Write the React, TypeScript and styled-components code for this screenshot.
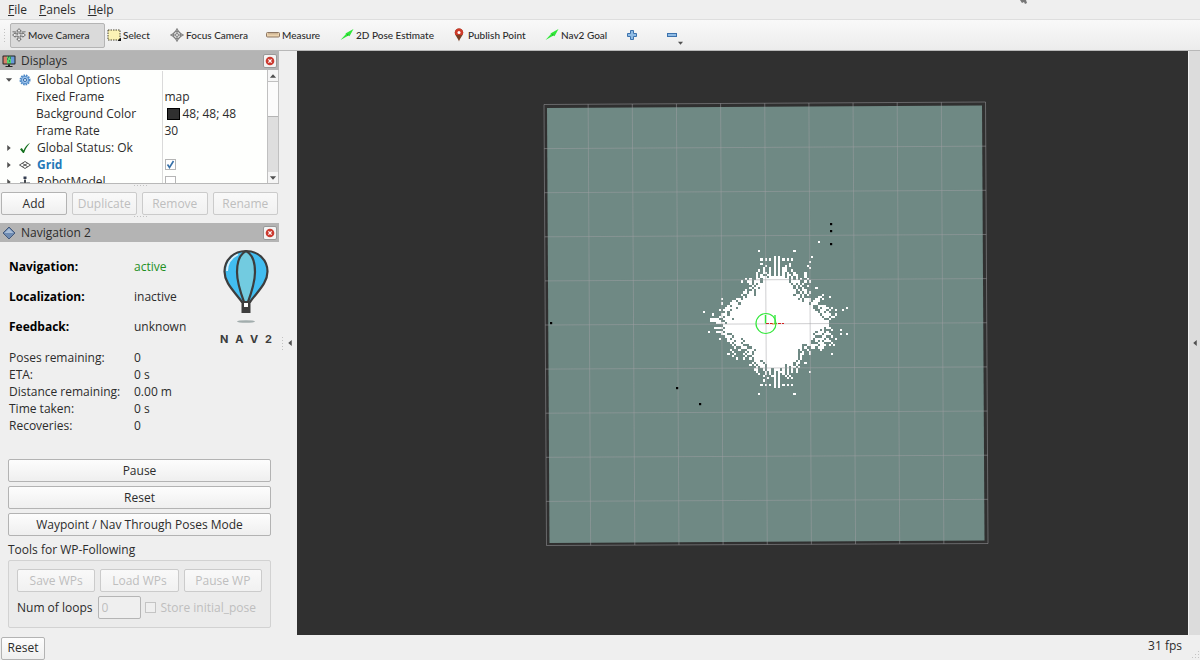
import React from "react";
import styled, { createGlobalStyle } from "styled-components";

const Global = createGlobalStyle`
  *, *::before, *::after { box-sizing: border-box; }
  body { margin: 0; background: #efefef; }
  body, button, input, table {
    font-family: "Open Sans", "Noto Sans", sans-serif;
    font-size: 12px;
    line-height: 16px;
    color: #2c2c2c;
  }
`;

const Window = styled.div`
  display: flex;
  flex-direction: column;
  height: 100vh;
  min-height: 640px;
  overflow: hidden;
`;

const MenuBar = styled.nav`
  display: flex;
  flex: none;
  gap: 12px;
  height: 20px;
  padding: 1px 8px;
  border-bottom: 1px solid #dedede;
`;

const MenuItem = styled.button`
  padding: 0;
  border: 0;
  background: none;
  &::first-letter { text-decoration: underline; }
`;

const Cursor = styled.svg`
  position: absolute;
  top: 0;
  left: 85%;
`;

const Toolbar = styled.div`
  display: flex;
  flex: none;
  align-items: center;
  height: 31px;
  padding-left: 10px;
  background: linear-gradient(#f9f9f9, #ececec);
  border-bottom: 1px solid #b8b8b8;
  position: relative;
`;

const Handle = styled.span<{ $vertical?: boolean }>`
  width: ${(p) => (p.$vertical ? "4px" : "14px")};
  height: ${(p) => (p.$vertical ? "14px" : "4px")};
  background-image: radial-gradient(#c2c2c2 1px, transparent 1px);
  background-size: 3px 3px;
`;

const ToolHandle = styled(Handle)`
  position: absolute;
  left: 3px;
`;

const ToolButton = styled.button<{ $width: number; $active?: boolean }>`
  display: flex;
  align-items: center;
  gap: 2px;
  flex: none;
  width: ${(p) => p.$width}px;
  height: 25px;
  padding: 0 1px;
  border: 1px solid ${(p) => (p.$active ? "#b4b4b4" : "transparent")};
  border-radius: 2px;
  background: ${(p) => (p.$active ? "#dadada" : "none")};
  font-family: Lato, "Open Sans", sans-serif;
  font-size: 10px;
  font-weight: 500;
  white-space: nowrap;
  position: relative;
  svg { flex: none; }
`;

const DropMark = styled.svg`
  position: absolute;
  right: 8px;
  bottom: 1px;
`;

const Main = styled.main`
  display: flex;
  flex: 1;
  min-height: 0;
`;

const Dock = styled.aside`
  display: flex;
  flex-direction: column;
  flex: none;
  width: 279px;
`;

const DockTitle = styled.header`
  display: flex;
  align-items: center;
  gap: 5px;
  flex: none;
  height: 19px;
  padding: 0 2px;
  background: #b4b4b4;
`;

const DockName = styled.h2`
  flex: 1;
  margin: 0;
  font-size: 12px;
  font-weight: 400;
`;

const CloseButton = styled.button`
  display: flex;
  align-items: center;
  justify-content: center;
  width: 14px;
  height: 14px;
  padding: 0;
  border: 1px solid #999;
  border-radius: 2px;
  background: #f4f4f4;
`;

const TreeArea = styled.div`
  display: flex;
  flex: none;
  height: 114px;
  overflow: hidden;
  background: #fefffd;
  border-bottom: 1px solid #b8b8b8;
`;

const TreeBody = styled.div`
  flex: 1;
  padding-top: 1px;
`;

const Tree = styled.table`
  width: 100%;
  table-layout: fixed;
  border-collapse: collapse;
`;

const TreeRow = styled.tr`
  height: 17px;
`;

const NameCell = styled.td<{ $child?: boolean }>`
  width: 162px;
  padding: 0 0 0 ${(p) => (p.$child ? 36 : 5)}px;
  border-right: 1px solid #dadada;
`;

const ValueCell = styled.td`
  padding: 0 0 0 2px;
`;

const CellContent = styled.div<{ $gap: number }>`
  display: flex;
  align-items: center;
  gap: ${(p) => p.$gap}px;
  height: 17px;
  white-space: nowrap;
`;

const DisplayName = styled.span<{ $active?: boolean }>`
  color: ${(p) => (p.$active ? "#2478b8" : "inherit")};
  font-weight: ${(p) => (p.$active ? 700 : 400)};
`;

const Swatch = styled.span`
  width: 13px;
  height: 12px;
  margin-left: 2px;
  border: 1px solid #000;
  background: #303030;
`;

const Check = styled.input`
  appearance: none;
  flex: none;
  width: 11px;
  height: 11px;
  margin: 0;
  border: 1px solid #b5b5b5;
  background: #fff;
  &:disabled { background: #efefef; border-color: #c4c4c4; }
`;

const CheckWrap = styled.label`
  display: grid;
  svg, input { grid-area: 1 / 1; place-self: center; }
  svg { pointer-events: none; z-index: 1; }
`;

const Scrollbar = styled.div`
  display: flex;
  flex-direction: column;
  flex: none;
  width: 12px;
  background: #dedede;
  border-left: 1px solid #c0c0c0;
  border-right: 1px solid #c0c0c0;
`;

const ScrollStep = styled.button`
  display: flex;
  align-items: center;
  justify-content: center;
  height: 11px;
  padding: 0;
  border: 0;
  background: #f5f5f5;
`;

const ScrollTrack = styled.div`
  flex: 1;
`;

const ScrollThumb = styled.div`
  height: 36px;
  background: #fbfbfb;
  border-top: 1px solid #c0c0c0;
  border-bottom: 1px solid #b4b4b4;
`;

const HandleRow = styled.div`
  display: flex;
  justify-content: center;
  flex: none;
  height: 8px;
`;

const ButtonRow = styled.div`
  display: grid;
  grid-auto-flow: column;
  grid-auto-columns: 1fr;
  gap: 5px;
`;

const DisplayActions = styled(ButtonRow)`
  padding: 0 1px;
`;

const PushButton = styled.button`
  height: 23px;
  padding: 0;
  border: 1px solid #b3b3b3;
  border-radius: 2px;
  background: linear-gradient(#fdfdfd, #efefef);
  text-align: center;
  white-space: nowrap;
  &:disabled {
    color: #bebebe;
    border-color: #cbcbcb;
    background: linear-gradient(#f9f9f9, #f1f1f1);
  }
`;

const NavStatus = styled.section`
  display: flex;
  justify-content: space-between;
  padding: 7px 7px 0 9px;
`;

const StatusLists = styled.div`
  display: flex;
  flex-direction: column;
  gap: 7px;
  padding-top: 3px;
`;

const StatusList = styled.dl`
  display: grid;
  grid-template-columns: 125px auto;
  margin: 0;
`;

const StatusTerm = styled.dt<{ $major?: boolean }>`
  line-height: ${(p) => (p.$major ? 30 : 17)}px;
  font-weight: ${(p) => (p.$major ? 700 : 400)};
  color: ${(p) => (p.$major ? "#000" : "inherit")};
`;

const StatusValue = styled.dd<{ $major?: boolean; $good?: boolean }>`
  margin: 0;
  line-height: ${(p) => (p.$major ? 30 : 17)}px;
  color: ${(p) => (p.$good ? "#1e8f1e" : "inherit")};
`;

const Brand = styled.figure`
  display: flex;
  flex-direction: column;
  align-items: center;
  gap: 10px;
  width: 52px;
  margin: 0;
`;

const BrandName = styled.figcaption`
  display: flex;
  justify-content: space-between;
  width: 100%;
  font-family: Inter, sans-serif;
  font-size: 11px;
  font-weight: 700;
  line-height: 12px;
  color: #3d3d3d;
`;

const NavControls = styled.section`
  display: flex;
  flex-direction: column;
  gap: 4px;
  padding: 25px 8px 0;
`;

const ToolsSection = styled.div``;

const ToolsLabel = styled.h3`
  margin: 0;
  font-size: 12px;
  font-weight: 400;
  line-height: 20px;
`;

const GroupBox = styled.div`
  display: flex;
  flex-direction: column;
  gap: 4px;
  height: 68px;
  padding: 8px;
  border: 1px solid #d2d2d2;
  border-radius: 2px;
  background: #ebebeb;
`;

const LoopRow = styled.div`
  display: flex;
  align-items: center;
  justify-content: space-between;
  padding-right: 6px;
  white-space: nowrap;
`;

const LoopInput = styled.input`
  width: 43px;
  height: 23px;
  padding: 0 3px;
  border: 1px solid #b5b5b5;
  border-radius: 2px;
  background: #efefef;
  &:disabled { color: #bebebe; }
`;

const StoreLabel = styled.label`
  display: flex;
  align-items: center;
  gap: 4px;
  color: #bebebe;
`;

const Splitter = styled.button<{ $right?: boolean }>`
  display: flex;
  align-items: center;
  justify-content: ${(p) => (p.$right ? "center" : "space-between")};
  flex: none;
  width: ${(p) => (p.$right ? 12 : 18)}px;
  padding: ${(p) => (p.$right ? "0" : "0 3px 0 1px")};
  border: 0;
  border-left: 1px solid ${(p) => (p.$right ? "#f4f4f4" : "#efefef")};
  background: ${(p) => (p.$right ? "#dcdcdc" : "#efefef")};
`;

const Viewport = styled.section`
  flex: 1;
  min-width: 0;
  background: #303030;
  svg { display: block; width: 100%; height: 100%; }
`;

const StatusBar = styled.footer`
  display: flex;
  align-items: center;
  justify-content: space-between;
  flex: none;
  height: 25px;
  padding: 1px 18px 0 1px;
  position: relative;
`;

const ResetButton = styled(PushButton)`
  width: 44px;
`;

const FrameRate = styled.span`
  padding-bottom: 4px;
`;

const SizeGrip = styled.svg`
  position: absolute;
  right: 0;
  bottom: 0;
`;

/* ---------- icons ---------- */

const MoveIcon = () => (
  <svg width="14" height="14" viewBox="0 0 14 14" fill="#e8e8e8" stroke="#555" strokeWidth="0.8">
    <path d="M7 .6 9.200 3H8v2.800h2.800V4.800L13.400 7l-2.600 2.200V8.200H8V11h1.200L7 13.400 4.800 11H6V8.200H3.200v1L.6 7l2.600-2.200v1H6V3H4.800z" />
    <circle cx="7" cy="7" r="1.800" fill="#ddd" strokeDasharray="1.500 1" />
    <path d="M.5 3.800 4.500 4M13.500 3.800 9.500 4" />
  </svg>
);
const SelectIcon = () => (
  <svg width="14" height="14" viewBox="0 0 14 14">
    <rect x="1" y="2" width="12" height="10" fill="#fbf3b4" stroke="#4a4632" strokeDasharray="1.500 1" />
    <path d="M14 9.500V13h-3.500z" fill="#111" />
  </svg>
);
const FocusIcon = () => (
  <svg width="14" height="14" viewBox="0 0 14 14" fill="#ddd" stroke="#777" strokeWidth="0.900">
    <path d="M7 .5 9 4l1 1 3.500 2L10 9 9 10 7 13.500 5 10 4 9 .5 7 4 5 5 4z" />
    <circle cx="7" cy="7" r="3.800" fill="none" />
    <circle cx="7" cy="7" r="1.500" fill="#eee" />
    <path d="M7 2v3M7 9v3M2 7h3M9 7h3" />
  </svg>
);
const MeasureIcon = () => (
  <svg width="14" height="14" viewBox="0 0 14 14">
    <rect x="0.500" y="4.500" width="13" height="4.500" rx="1" fill="#ecd3ae" stroke="#8d7663" />
    <path d="M3 5v1.500M5 5v1.500M7 5v1.500M9 5v1.500M11 5v1.500" stroke="#8d7663" strokeWidth=".6" />
  </svg>
);
const ArrowIcon = () => (
  <svg width="14" height="14" viewBox="0 0 14 14">
    <path d="M.5 12 6 6l-.6-.6L13.500 1 9.500 8.300 8.500 7.500z" fill="#31e83a" />
    <path d="m7 6.500 1.500.3-.5 1z" fill="#16551a" />
  </svg>
);
const PinIcon = () => (
  <svg width="14" height="14" viewBox="0 0 14 14">
    <path d="M7 .5C4.500.5 2.800 2.200 2.800 4.500 2.800 7.500 6 10 7 13.500 8 10 11.200 7.500 11.200 4.500 11.200 2.200 9.500.5 7 .5z" fill="#7b3f24" />
    <path d="M7 .5C4.500.5 2.800 2.200 2.800 4.500c0 1 .3 1.800.8 2.500h6.800c.5-.7.8-1.500.8-2.500C11.200 2.200 9.500.5 7 .5z" fill="#cf3b2a" />
    <circle cx="7" cy="4.500" r="1.500" fill="#fff" />
  </svg>
);
const PlusIcon = () => (
  <svg width="12" height="12" viewBox="0 0 12 12">
    <path d="M4.500 1.500h3v3h3v3h-3v3h-3v-3h-3v-3h3z" fill="#8fbbe4" stroke="#3c72ad" />
  </svg>
);
const MinusIcon = () => (
  <svg width="12" height="12" viewBox="0 0 12 12">
    <rect x="1.500" y="4.500" width="9" height="3" fill="#8fbbe4" stroke="#3c72ad" />
  </svg>
);
const Triangle = ({ dir }: { dir: "right" | "down" | "up" | "left" }) => {
  const d = { right: "M2 .5 6 4 2 7.500z", down: "M.5 2 4 6 7.500 2z", up: "M.5 6 4 2 7.500 6z", left: "M6 .5 2 4 6 7.500z" }[dir];
  return (
    <svg width="8" height="8" viewBox="-.5 -.5 9 9"><path d={d} fill="#505050" /></svg>
  );
};
const MonitorIcon = () => (
  <svg width="14" height="14" viewBox="0 0 14 14">
    <rect x=".5" y="1.500" width="13" height="9" rx="1" fill="#222" />
    <rect x="1.500" y="2.500" width="4" height="7" fill="#d5806a" />
    <rect x="5" y="2.500" width="4" height="7" fill="#56d36b" />
    <rect x="9" y="2.500" width="3.500" height="7" fill="#6a9bd8" />
    <path d="M5 5h1M8 4h1M7 7h1M6 3h1" stroke="#144" />
    <path d="M6 10.500h2v1.500h2.500v1h-7v-1H6z" fill="#222" />
  </svg>
);
const DiamondIcon = () => (
  <svg width="14" height="14" viewBox="0 0 14 14">
    <path d="M7 1 13 7 7 13 1 7z" fill="#6f8cb3" stroke="#45597a" />
    <path d="M7 2.500 11.500 7H2.500z" fill="#a9bdd6" />
  </svg>
);
const CloseIcon = () => (
  <svg width="10" height="10" viewBox="0 0 10 10">
    <circle cx="5" cy="5" r="4.300" fill="#cb3a30" />
    <path d="m3.400 3.400 3.200 3.200m0-3.200L3.400 6.600" stroke="#fff" strokeWidth="1.300" />
  </svg>
);
const GearIcon = () => (
  <svg width="12" height="12" viewBox="0 0 12 12" fill="none">
    <circle cx="6" cy="6" r="4.700" stroke="#4a86c5" strokeWidth="1.600" strokeDasharray="1.600 .9" />
    <circle cx="6" cy="6" r="3.800" fill="#9dc3ea" stroke="#4f8ccb" />
    <circle cx="6" cy="6" r="1.600" fill="#cfe1f5" stroke="#3c72ad" />
  </svg>
);
const TickIcon = () => (
  <svg width="12" height="12" viewBox="0 0 12 12">
    <path d="M1 7.200 2.800 6l1.700 2.400C6 5 8 2.500 11 .8 8.500 4 6.500 7 5 11H4z" fill="#14701e" />
  </svg>
);
const GridIcon = () => (
  <svg width="12" height="12" viewBox="0 0 12 12" fill="none" stroke="#444" strokeWidth=".9">
    <path d="M6 2.500 11.500 6 6 9.500.5 6zM3.300 4.300 8.700 7.700M8.700 4.300 3.300 7.700" />
  </svg>
);
const RobotIcon = () => (
  <svg width="12" height="12" viewBox="0 0 12 12">
    <path d="M4.500.5h3v2.500h-3zM5 4h2v3H5zM1 6.500h3.500V10H1zM7.500 6.500H11V10H7.500z" fill="#333c50" />
    <path d="M6 3v3L3 8.500M6 6l3 2.500" fill="none" stroke="#555" />
  </svg>
);
const CheckMark = () => (
  <svg width="11" height="11" viewBox="0 0 11 11">
    <path d="M2.500 5.500 4.500 8.500 8.500 2" fill="none" stroke="#3670a8" strokeWidth="1.600" />
  </svg>
);

const Balloon = () => (
  <svg width="48" height="74" viewBox="0 0 48 74" role="img" aria-label="Balloon">
    <path d="M24 2C11.500 2 2.500 11 2.500 22.500 2.500 34 12 42 20 53h8c8-11 17.500-19 17.500-30.500C45.500 11 36.500 2 24 2z" fill="#42bdf0" />
    <path d="M24 2c-6 3-9 11-9 21s3 19 7 30h4c4-11 7-20 7-30S30 5 24 2z" fill="#72cbe0" />
    <path d="M5 22C5 13 10 8 16 5" fill="none" stroke="#d6effa" strokeWidth="2" />
    <g fill="none" stroke="#3d3d3d" strokeWidth="2.200">
      <path d="M24 2C11.500 2 2.500 11 2.500 22.500 2.500 34 12 42 20 53h8c8-11 17.500-19 17.500-30.500C45.500 11 36.500 2 24 2z" />
      <path d="M24 2c-6 3-9 11-9 21s3 19 7 30M24 2c6 3 9 11 9 21s-3 19-7 30" />
    </g>
    <path d="M19.500 52h9v12h-9z" fill="#3d3d3d" />
    <path d="M22 54h4v4h-4z" fill="#fff" />
    <ellipse cx="24" cy="72.500" rx="9" ry="1.300" fill="#a2adad" />
  </svg>
);

/* ---------- occupancy map ---------- */

/* Free cells of the map, one entry per grid row: [row, column runs]. */
const FREE_CELLS: [number, string][] = [
  [14, "58"],
  [18, "31,47"],
  [21, "38,40,55"],
  [22, "32,34,36,38,40,42,44,46"],
  [23, "38,40,54"],
  [24, "32,38,40,45"],
  [25, "34,38,40,43,45,53"],
  [26, "33,36,38,40,42,43,54"],
  [27, "31,33,36,38,40,42-43,46"],
  [28, "30,33-34,36,38,40,42,44,47,52"],
  [29, "30,32,35-36,38,40,42,44-45,47-48,52"],
  [30, "30,32-34,36-42,44,46,48,52"],
  [31, "25,27,30-31,33-44,46,48,50,53"],
  [32, "23,26-27,29-31,33-44,46-49,52,54"],
  [33, "27,29,31-45,47,49,51"],
  [34, "28,30-46,48,50,53"],
  [35, "27,29-30,32-46,48,51,57"],
  [36, "25,28,30-47,49,51-52"],
  [37, "24-25,27-28,30-47,50,52,54"],
  [38, "23,26-28,30-46,48-49,51,53,60"],
  [39, "24,26-49,51,58-59,63"],
  [40, "14,21-22,24-48,50,52-54,57-58,60"],
  [41, "19-20,22-50,52-54,56-58"],
  [42, "14,18-21,23-53,55-57"],
  [43, "17,19-55,58-61"],
  [44, "16-20,22-55,58,60-62,64,71"],
  [45, "13,15-17,19-56,59-61,63,66,69"],
  [46, "6,16,18-57,59-60,62"],
  [47, "10,14-16,18-58,60-63,66"],
  [48, "13-14,16-59,61-62,64-65"],
  [49, "9-12,15-18,20-60,63"],
  [50, "9-13,16-62"],
  [51, "12-15,17-62"],
  [52, "15-62"],
  [53, "11-14,16-60,62-63"],
  [54, "15-58,60,64,68"],
  [55, "8,12-14,16-56,58-60,62"],
  [56, "14-16,19-55,57-59,61-63,68,71"],
  [57, "16-18,20-56,60-61,64"],
  [58, "13,17,19-22,24-55,57-60,62,66"],
  [59, "17-19,21-23,25-54,57,59,61-63"],
  [60, "18,20-22,24-54,58-60,64"],
  [61, "19,21-23,27-50,53-57,59-61,63,65"],
  [62, "20,23-25,28-50,52,55-56,58-60"],
  [63, "18,22,26-28,30-48,50,53,59"],
  [64, "19,25,27,29-48,51,54"],
  [65, "17,20,24,26-27,29-48,50-51,54,64"],
  [66, "19,25,28-48,50"],
  [67, "21,24,27,29-48,50"],
  [68, "29-31,33-47,49"],
  [69, "28,30-32,34-46,48-49,52"],
  [70, "27,29,31-33,35-42,44-46,48"],
  [71, "30,32-33,35-42,44,46-47,49"],
  [72, "29-30,33,35-36,38-40,42,44,46,48"],
  [73, "30,34,36,38,40-42,44,46,48,54"],
  [74, "31,34,36,38,40,42,44"],
  [75, "33,37-38,40,43,45"],
  [76, "35,38,40,44,46"],
  [77, "33,38,40"],
  [78, "38,40"],
  [79, "32,34,36,38,40,42,44,46"],
  [80, "38,40"],
  [83, "31,47"],
];

const CELL = 2.2;

const freePath = FREE_CELLS.map(([row, runs]) =>
  runs
    .split(",")
    .map((run) => {
      const [from, to = from] = run.split("-").map(Number);
      const y = (210 + row * CELL).toFixed(1);
      const w = ((to - from + 1) * CELL).toFixed(1);
      return `M${(690 + from * CELL).toFixed(1)} ${y}h${w}v${CELL}h-${w}z`;
    })
    .join("")
).join("");

const OCCUPIED = [
  [830, 223], [830, 230], [830, 243], [550, 322], [676, 387], [699, 403],
];

const gridLines = Array.from({ length: 11 }, (_, i) => i / 10);

const MapView = () => (
  <svg viewBox="297 51 891 584" role="img" aria-label="Map">
    <path d="M547 108 982 105.500 984.500 540.500 549.500 543z" fill="#6f8984" />
    <path d={freePath} fill="#fff" shapeRendering="crispEdges" />
    <g stroke="#a0a0a4" strokeOpacity=".5" strokeWidth="1">
      {gridLines.map((t) => (
        <React.Fragment key={t}>
          <line x1={544 + 441.5 * t} y1={104.5 - 2.5 * t} x2={546.5 + 441.5 * t} y2={545.5 - 2 * t} />
          <line x1={544 + 2.5 * t} y1={104.5 + 441 * t} x2={985.5 + 2.5 * t} y2={102 + 441.5 * t} />
        </React.Fragment>
      ))}
    </g>
    {OCCUPIED.map(([x, y]) => (
      <rect key={`${x}-${y}`} x={x} y={y} width="2.200" height="2.200" fill="#000" />
    ))}
    <g fill="none">
      <path d="M766 323.500h18" stroke="#d42020" strokeDasharray="3 1" />
      <path d="M772 324h4" stroke="#d8b040" />
      <circle cx="766" cy="323.500" r="10" stroke="#34e83c" strokeWidth="1.200" />
      <path d="M765.500 315v8.500M775 315v9" stroke="#34e83c" strokeWidth="1.400" />
    </g>
  </svg>
);

/* ---------- panels ---------- */

type TreeItem = {
  name: string;
  icon?: React.ReactNode;
  open?: boolean;
  value?: string;
  swatch?: boolean;
  checked?: boolean;
};

const TREE: TreeItem[] = [
  { name: "Global Options", icon: <GearIcon />, open: true },
  { name: "Fixed Frame", value: "map" },
  { name: "Background Color", value: "48; 48; 48", swatch: true },
  { name: "Frame Rate", value: "30" },
  { name: "Global Status: Ok", icon: <TickIcon /> },
  { name: "Grid", icon: <GridIcon />, checked: true },
  { name: "RobotModel", icon: <RobotIcon />, checked: false },
];

const TOOLS: { label: string; icon: React.ReactNode; width: number; active?: boolean }[] = [
  { label: "Move Camera", icon: <MoveIcon />, width: 95, active: true },
  { label: "Select", icon: <SelectIcon />, width: 63 },
  { label: "Focus Camera", icon: <FocusIcon />, width: 96 },
  { label: "Measure", icon: <MeasureIcon />, width: 74 },
  { label: "2D Pose Estimate", icon: <ArrowIcon />, width: 112 },
  { label: "Publish Point", icon: <PinIcon />, width: 93 },
  { label: "Nav2 Goal", icon: <ArrowIcon />, width: 81 },
];

type Status = { term: string; value: string; good?: boolean };

const NAV_STATES: Status[] = [
  { term: "Navigation:", value: "active", good: true },
  { term: "Localization:", value: "inactive" },
  { term: "Feedback:", value: "unknown" },
];

const NAV_FEEDBACK: Status[] = [
  { term: "Poses remaining:", value: "0" },
  { term: "ETA:", value: "0 s" },
  { term: "Distance remaining:", value: "0.00 m" },
  { term: "Time taken:", value: "0 s" },
  { term: "Recoveries:", value: "0" },
];

const DisplaysPanel = () => (
  <>
    <DockTitle>
      <MonitorIcon />
      <DockName>Displays</DockName>
      <CloseButton aria-label="Close Displays"><CloseIcon /></CloseButton>
    </DockTitle>
    <TreeArea>
      <TreeBody>
        <Tree>
          <tbody>
            {TREE.map((item) => (
              <TreeRow key={item.name}>
                <NameCell $child={!item.icon}>
                  <CellContent $gap={item.icon ? 6 : 0}>
                    {item.icon && <Triangle dir={item.open ? "down" : "right"} />}
                    {item.icon}
                    <DisplayName $active={item.checked}>{item.name}</DisplayName>
                  </CellContent>
                </NameCell>
                <ValueCell>
                  <CellContent $gap={3}>
                    {item.swatch && <Swatch />}
                    {item.value}
                    {item.checked !== undefined && (
                      <CheckWrap>
                        <Check type="checkbox" aria-label={item.name} defaultChecked={item.checked} />
                        {item.checked && <CheckMark />}
                      </CheckWrap>
                    )}
                  </CellContent>
                </ValueCell>
              </TreeRow>
            ))}
          </tbody>
        </Tree>
      </TreeBody>
      <Scrollbar>
        <ScrollStep aria-label="Scroll up"><Triangle dir="up" /></ScrollStep>
        <ScrollTrack><ScrollThumb /></ScrollTrack>
        <ScrollStep aria-label="Scroll down"><Triangle dir="down" /></ScrollStep>
      </Scrollbar>
    </TreeArea>
    <HandleRow><Handle /></HandleRow>
    <DisplayActions>
      <PushButton>Add</PushButton>
      <PushButton disabled>Duplicate</PushButton>
      <PushButton disabled>Remove</PushButton>
      <PushButton disabled>Rename</PushButton>
    </DisplayActions>
    <HandleRow><Handle /></HandleRow>
  </>
);

const StatusGroup = ({ items, major }: { items: Status[]; major?: boolean }) => (
  <StatusList>
    {items.map((s) => (
      <React.Fragment key={s.term}>
        <StatusTerm $major={major}>{s.term}</StatusTerm>
        <StatusValue $major={major} $good={s.good}>{s.value}</StatusValue>
      </React.Fragment>
    ))}
  </StatusList>
);

const NavigationPanel = () => (
  <>
    <DockTitle>
      <DiamondIcon />
      <DockName>Navigation 2</DockName>
      <CloseButton aria-label="Close Navigation 2"><CloseIcon /></CloseButton>
    </DockTitle>
    <NavStatus>
      <StatusLists>
        <StatusGroup items={NAV_STATES} major />
        <StatusGroup items={NAV_FEEDBACK} />
      </StatusLists>
      <Brand>
        <Balloon />
        <BrandName><span>N</span><span>A</span><span>V</span><span>2</span></BrandName>
      </Brand>
    </NavStatus>
    <NavControls>
      <PushButton>Pause</PushButton>
      <PushButton>Reset</PushButton>
      <PushButton>Waypoint / Nav Through Poses Mode</PushButton>
      <ToolsSection>
        <ToolsLabel>Tools for WP-Following</ToolsLabel>
        <GroupBox>
          <ButtonRow>
            <PushButton disabled>Save WPs</PushButton>
            <PushButton disabled>Load WPs</PushButton>
            <PushButton disabled>Pause WP</PushButton>
          </ButtonRow>
          <LoopRow>
            <label htmlFor="loops">Num of loops</label>
            <LoopInput id="loops" defaultValue="0" disabled />
            <StoreLabel>
              <Check type="checkbox" disabled />
              Store initial_pose
            </StoreLabel>
          </LoopRow>
        </GroupBox>
      </ToolsSection>
    </NavControls>
  </>
);

export default function App() {
  return (
    <Window>
      <Global />
      <MenuBar>
        <MenuItem>File</MenuItem>
        <MenuItem>Panels</MenuItem>
        <MenuItem>Help</MenuItem>
      </MenuBar>
      <Cursor width="8" height="5" viewBox="0 0 8 5">
        <path d="M0 0h6l1 3-2 1-1-2-2 1z" fill="#777" />
      </Cursor>
      <Toolbar>
        <ToolHandle $vertical />
        {TOOLS.map((tool) => (
          <ToolButton key={tool.label} $width={tool.width} $active={tool.active}>
            {tool.icon}
            {tool.label}
          </ToolButton>
        ))}
        <ToolButton $width={40} aria-label="Add tool"><PlusIcon /></ToolButton>
        <ToolButton $width={28} aria-label="Remove tool">
          <MinusIcon />
          <DropMark width="5" height="5" viewBox="0 0 8 8"><path d="M0 1h8L4 6z" fill="#505050" /></DropMark>
        </ToolButton>
      </Toolbar>
      <Main>
        <Dock>
          <DisplaysPanel />
          <NavigationPanel />
        </Dock>
        <Splitter aria-label="Collapse left dock">
          <Handle $vertical />
          <Triangle dir="left" />
        </Splitter>
        <Viewport><MapView /></Viewport>
        <Splitter $right aria-label="Expand right dock"><Triangle dir="left" /></Splitter>
      </Main>
      <StatusBar>
        <ResetButton>Reset</ResetButton>
        <FrameRate>31 fps</FrameRate>
        <SizeGrip width="10" height="10" viewBox="0 0 10 10" fill="#c4c4c4">
          <path d="M8 1h1v1H8zM5 4h1v1H5zM8 4h1v1H8zM2 7h1v1H2zM5 7h1v1H5zM8 7h1v1H8z" />
        </SizeGrip>
      </StatusBar>
    </Window>
  );
}
